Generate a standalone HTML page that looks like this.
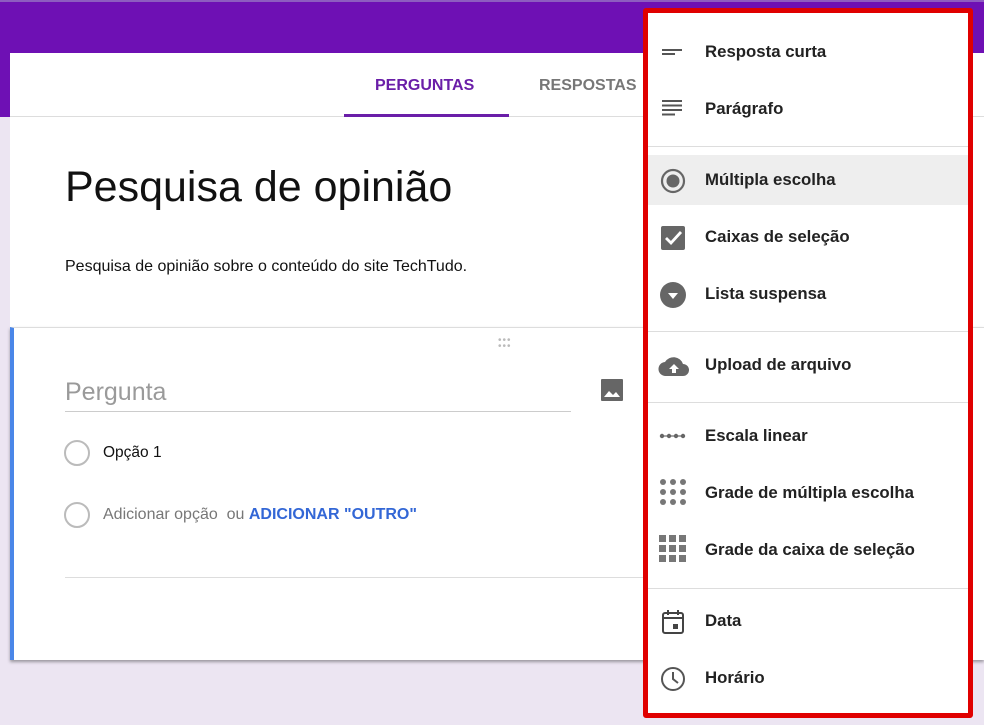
<!DOCTYPE html>
<html><head><meta charset="utf-8"><style>
*{margin:0;padding:0;box-sizing:border-box}
body{width:984px;height:725px;overflow:hidden;background:#ece5f2;font-family:"Liberation Sans",Arial,sans-serif;position:relative}
.hdr{position:absolute;left:0;top:0;width:984px;height:117px;background:#6e10b4;border-top:2px solid #8d5cc0}
.card{position:absolute;left:10px;top:53px;width:974px;height:274px;background:#fff}
.tabs{position:absolute;left:0;top:0;width:974px;height:64px;border-bottom:1px solid #ddd}
.tab{position:absolute;top:24px;font-size:16px;font-weight:bold;color:#777}
.q{position:absolute;left:10px;top:327px;width:974px;height:333px;background:#fff;border-left:4px solid #4a86e8;box-shadow:0 2px 3px rgba(0,0,0,.35);border-top:1px solid #ddd}
.menu{position:absolute;left:643px;top:8px;width:330px;height:710px;border:5px solid #e00000;background:#fff;border-radius:3px}
.it{position:absolute;left:0;width:320px;height:50px}
.it span{position:absolute;left:57px;top:50%;transform:translateY(-50%);font-size:16.8px;font-weight:bold;color:#222}
.it svg{position:absolute;left:12px;top:13px}
.dv{position:absolute;left:0;width:320px;height:1px;background:#ddd}
.rad{position:absolute;width:26px;height:26px;border:2px solid #bbb;border-radius:50%}
</style></head><body>
<div class="hdr"></div>
<div class="card">
 <div class="tabs">
  <div class="tab" style="left:365px;color:#6a1ea8">PERGUNTAS</div>
  <div style="position:absolute;left:334px;top:61px;width:165px;height:3px;background:#6a1ea8"></div>
  <div class="tab" style="left:529px">RESPOSTAS</div>
 </div>
 <div style="position:absolute;left:55px;top:110px;font-size:43px;color:#111">Pesquisa de opinião</div>
 <div style="position:absolute;left:55px;top:205px;font-size:16px;color:#111">Pesquisa de opinião sobre o conteúdo do site TechTudo.</div>
</div>
<div class="q">
 <div style="position:absolute;left:484px;top:10px;width:20px;color:#bbb;font-size:10px;letter-spacing:1px;line-height:6px">•••<br>•••</div>
 <div style="position:absolute;left:51px;top:50px;font-size:25px;color:#9a9a9a">Pergunta</div>
 <div style="position:absolute;left:51px;top:83px;width:506px;height:1px;background:#ccc"></div>
 <svg style="position:absolute;left:586px;top:50px" width="24" height="24" viewBox="0 0 24 24"><rect x="1" y="1" width="22" height="22" rx="1" fill="#666"/><path d="M4 19l5-6 4 4 3-3 4 5z" fill="#fff"/></svg>
 <div class="rad" style="left:50px;top:112px"></div>
 <div style="position:absolute;left:89px;top:116px;font-size:15.5px;color:#111">Opção 1</div>
 <div class="rad" style="left:50px;top:174px"></div>
 <div style="position:absolute;left:89px;top:178px;font-size:16px;color:#777">Adicionar opção&nbsp; ou <b style="color:#3367d6">ADICIONAR "OUTRO"</b></div>
 <div style="position:absolute;left:51px;top:249px;width:600px;height:1px;background:#ddd"></div>
</div>
<div class="menu">
 <div class="it" style="top:14px"><svg width="24" height="24"><path d="M2 10h20M2 14h13" stroke="#555" stroke-width="2"/></svg><span>Resposta curta</span></div>
 <div class="it" style="top:71px"><svg width="24" height="24"><path d="M2 4h20M2 8.5h20M2 13h20M2 17.5h13" stroke="#555" stroke-width="2"/></svg><span>Parágrafo</span></div>
 <div class="dv" style="top:133px"></div>
 <div class="it" style="top:142px;background:#eee"><svg width="26" height="26"><circle cx="13" cy="13" r="11" fill="none" stroke="#666" stroke-width="2.2"/><circle cx="13" cy="13" r="6.5" fill="#666"/></svg><span>Múltipla escolha</span></div>
 <div class="it" style="top:199px"><svg width="26" height="26"><rect x="1" y="1" width="24" height="24" rx="2" fill="#666"/><path d="M6 13l5 5 10-11" stroke="#fff" stroke-width="2.8" fill="none"/></svg><span>Caixas de seleção</span></div>
 <div class="it" style="top:256px"><svg width="26" height="26"><circle cx="13" cy="13" r="13" fill="#666"/><path d="M8 11h10l-5 6z" fill="#fff"/></svg><span>Lista suspensa</span></div>
 <div class="dv" style="top:318px"></div>
 <div class="it" style="top:327px"><svg width="32" height="26" style="left:10px"><path d="M8 23a7 7 0 0 1-1-14 10 10 0 0 1 18 2 6 6 0 0 1 0 12z" fill="#666"/><path d="M16 11l-5 5h3v4h4v-4h3z" fill="#fff"/></svg><span>Upload de arquivo</span></div>
 <div class="dv" style="top:389px"></div>
 <div class="it" style="top:398px"><svg width="28" height="24" style="left:10px"><path d="M2 12h24" stroke="#888" stroke-width="1.5"/><circle cx="4" cy="12" r="2.2" fill="#666"/><circle cx="11" cy="12" r="2.2" fill="#666"/><circle cx="18" cy="12" r="2.2" fill="#666"/><circle cx="25" cy="12" r="2.2" fill="#666"/></svg><span>Escala linear</span></div>
 <div class="it" style="top:455px"><svg width="30" height="30" style="left:11px;top:10px"><g fill="#777"><circle cx="4" cy="4" r="3"/><circle cx="14" cy="4" r="3"/><circle cx="24" cy="4" r="3"/><circle cx="4" cy="14" r="3"/><circle cx="14" cy="14" r="3"/><circle cx="24" cy="14" r="3"/><circle cx="4" cy="24" r="3"/><circle cx="14" cy="24" r="3"/><circle cx="24" cy="24" r="3"/></g></svg><span>Grade de múltipla escolha</span></div>
 <div class="it" style="top:512px"><svg width="30" height="30" style="left:11px;top:10px"><g fill="#777"><rect x="0" y="0" width="7" height="7"/><rect x="10" y="0" width="7" height="7"/><rect x="20" y="0" width="7" height="7"/><rect x="0" y="10" width="7" height="7"/><rect x="10" y="10" width="7" height="7"/><rect x="20" y="10" width="7" height="7"/><rect x="0" y="20" width="7" height="7"/><rect x="10" y="20" width="7" height="7"/><rect x="20" y="20" width="7" height="7"/></g></svg><span>Grade da caixa de seleção</span></div>
 <div class="dv" style="top:575px"></div>
 <div class="it" style="top:583px"><svg width="26" height="26"><rect x="3" y="4" width="20" height="20" rx="2" fill="none" stroke="#444" stroke-width="2"/><path d="M3 9h20M8 1v5M18 1v5" stroke="#444" stroke-width="2"/><rect x="13" y="15" width="5" height="5" fill="#444"/></svg><span>Data</span></div>
 <div class="it" style="top:640px"><svg width="26" height="26"><circle cx="13" cy="13" r="11" fill="none" stroke="#555" stroke-width="2"/><path d="M13 6v7l5 4" stroke="#555" stroke-width="2" fill="none"/></svg><span>Horário</span></div>
</div>
</body></html>
